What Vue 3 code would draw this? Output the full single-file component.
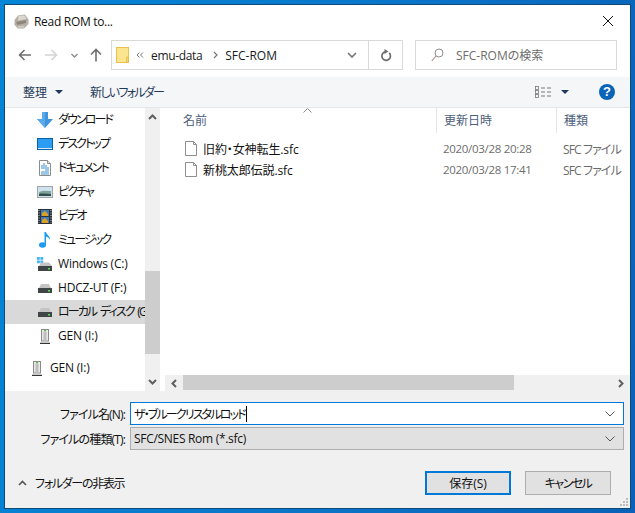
<script setup>
const navItems = [
  { label: 'ダウンロード', icon: 'download', kana: true },
  { label: 'デスクトップ', icon: 'desktop', kana: true },
  { label: 'ドキュメント', icon: 'doc', kana: true },
  { label: 'ピクチャ', icon: 'pic', kana: true },
  { label: 'ビデオ', icon: 'video', kana: true },
  { label: 'ミュージック', icon: 'music', kana: true },
  { label: 'Windows (C:)', icon: 'win' },
  { label: 'HDCZ-UT (F:)', icon: 'drive' },
  { label: 'ローカル ディスク (G:)', icon: 'drive', selected: true, kana: true },
  { label: 'GEN (I:)', icon: 'usb' },
  { label: 'GEN (I:)', icon: 'usb', root: true }
]
const files = [
  { name: '旧約・女神転生.sfc', date: '2020/03/28 20:28', type: 'SFC ファイル' },
  { name: '新桃太郎伝説.sfc', date: '2020/03/28 17:41', type: 'SFC ファイル' }
]
</script>

<template>
  <div class="desktop">
    <div class="window">
      <header class="title">
        <svg class="app" width="15" height="15" viewBox="0 0 15 15">
          <path d="M4 1.500 11 .5l3.500 5v4.500L10 14.500H4L.5 11V6z" fill="#b5afa6"/>
          <path d="M4.500 2 10.500 1.500 12.500 5 4 6.500z" fill="#dcd8d0"/>
          <path d="M2 8l10-2v3L3.500 11z" fill="#8c867c"/>
          <path d="M4 12h6v1.500H4z" fill="#d2cec6"/>
        </svg>
        <span class="title-text">Read ROM to...</span>
        <svg class="close" width="12" height="12" viewBox="0 0 12 12"><path d="M1 1l10 10M11 1 1 11" stroke="#111" stroke-width="1" fill="none"/></svg>
      </header>

      <div class="navbar">
        <div class="arrows">
          <svg width="14" height="12" viewBox="0 0 14 12"><path d="M13 6H2M6.500 1 1.500 6l5 5" stroke="#6f6f6f" stroke-width="1.600" fill="none"/></svg>
          <svg width="14" height="12" viewBox="0 0 14 12"><path d="M1 6h11M7.500 1l5 5-5 5" stroke="#d4d4d4" stroke-width="1.600" fill="none"/></svg>
          <svg width="7" height="5" viewBox="0 0 7 5"><path d="M.5 1l3 3 3-3" stroke="#8a8a8a" stroke-width="1.300" fill="none"/></svg>
          <svg width="12" height="14" viewBox="0 0 12 14"><path d="M6 13.500V2M1 6.500l5-5 5 5" stroke="#6f6f6f" stroke-width="1.600" fill="none"/></svg>
        </div>
        <div class="address">
          <svg class="folder" width="13" height="16" viewBox="0 0 13 16"><rect x=".5" y=".5" width="12" height="15" fill="#fbe68f" stroke="#e8c14f"/><rect x="10.500" y="10" width="2" height="5.500" fill="#f6d36b" stroke="#e0b43f" stroke-width=".6"/></svg>
          <svg class="crumb-first" width="8" height="6" viewBox="0 0 8 6"><path d="M3.500.5 1 3l2.500 2.500M7 .500 4.500 3 7 5.500" stroke="#777" fill="none"/></svg>
          <span class="crumb">emu-data</span>
          <svg class="sep" width="5" height="8" viewBox="0 0 5 8"><path d="M1 1l3 3-3 3" stroke="#777" stroke-width="1.200" fill="none"/></svg>
          <span>SFC-ROM</span>
          <svg class="addr-drop" width="10" height="6" viewBox="0 0 10 6"><path d="M1 1l4 4 4-4" stroke="#777" stroke-width="1.600" fill="none"/></svg>
          <div class="refresh">
            <svg width="12" height="13" viewBox="0 0 12 13"><path d="M4 3.200a4.300 4.300 0 1 0 4.300 0" stroke="#6f6f6f" stroke-width="1.700" fill="none" transform="rotate(15 6 7)"/><path d="M4.500 0v5l4-2.500z" fill="#6f6f6f"/></svg>
          </div>
        </div>
        <div class="search">
          <svg width="13" height="14" viewBox="0 0 13 14"><circle cx="8" cy="5" r="4" stroke="#8f8f8f" fill="none"/><path d="M5 8 .8 13" stroke="#b08a8a" stroke-width="1.100"/></svg>
          <span>SFC-ROMの検索</span>
        </div>
      </div>

      <div class="toolbar">
        <span class="tool organize">整理</span>
        <i class="caret"></i>
        <span class="tool newfolder">新しいフォルダー</span>
        <svg class="views" width="16" height="12" viewBox="0 0 16 12">
          <rect x=".5" y=".500" width="3" height="3" fill="none" stroke="#777" stroke-width=".8"/>
          <rect x=".5" y="4.500" width="3" height="3" fill="none" stroke="#777" stroke-width=".8"/>
          <rect x=".5" y="8.500" width="3" height="3" fill="none" stroke="#777" stroke-width=".8"/>
          <path d="M6 2h4M12 2h4M6 6h4M12 6h4M6 10h4M12 10h4" stroke="#777"/>
        </svg>
        <i class="caret viewcaret"></i>
        <span class="help">?</span>
      </div>

      <main class="main">
        <nav class="tree">
          <div v-for="(item, i) in navItems" :key="i" class="tree-row" :class="{ selected: item.selected, root: item.root }">
            <span class="ti">
              <svg v-if="item.icon === 'download'" width="16" height="16" viewBox="0 0 16 16"><path d="M5 0h6v7h5l-8 9-8-9h5z" fill="#3f94dc"/><path d="M5 0h3v16L0 7h5z" fill="#5aa9ea"/></svg>
              <svg v-else-if="item.icon === 'desktop'" width="16" height="12" viewBox="0 0 16 12"><rect width="16" height="12" fill="#0b62a8"/><rect x="1" y="1" width="14" height="9" fill="#2b9df2"/><path d="M1 10h14v1H1z" fill="#d5e9f8"/></svg>
              <svg v-else-if="item.icon === 'doc'" width="12" height="16" viewBox="0 0 12 16"><path d="M.500.500h8l3 3v12H.500z" fill="#fff" stroke="#8b8b8b"/><path d="M4 4h2M2 6h6M2 8h8M6 10h4M2 12h8M2 14h8" stroke="#3d8fcf"/><path d="M8.500.500v3h3" fill="#ddd" stroke="#8b8b8b"/></svg>
              <svg v-else-if="item.icon === 'pic'" width="16" height="12" viewBox="0 0 16 12"><rect x=".500" y=".500" width="15" height="11" fill="#cfe3ee" stroke="#a3a3a3"/><path d="M2 6c4-2 8-1 12-1v5H2z" fill="#7fa39a"/><path d="M2 8c4-1 8 0 12 0v2H2z" fill="#2f4f4a"/></svg>
              <svg v-else-if="item.icon === 'video'" width="14" height="15" viewBox="0 0 14 15"><rect width="14" height="15" fill="#2c3238"/><rect x="3" y="1" width="8" height="6" fill="#3f7bb5"/><rect x="3" y="8" width="8" height="6" fill="#3f7bb5"/><path d="M4 4l3-2 3 3v2H4zM4 11l3-2 3 3v2H4z" fill="#d9a12a"/><path d="M1 1v13M13 1v13" stroke="#cfd3d6" stroke-dasharray="1 1.500"/></svg>
              <svg v-else-if="item.icon === 'music'" width="12" height="16" viewBox="0 0 12 16"><ellipse cx="3.500" cy="13" rx="3.500" ry="2.800" fill="#1d9bf0"/><path d="M5.500 13V0h1.500c.5 3 4.500 4 4 8-.6-2-2.500-3-4-3.500V13z" fill="#1d9bf0"/></svg>
              <svg v-else-if="item.icon === 'win'" width="16" height="14" viewBox="0 0 16 14"><path d="M0 0h2.800v2.800H0zM3.400 0h2.800v2.800H3.400zM0 3.400h2.800v2.800H0zM3.400 3.400h2.800v2.800H3.400z" fill="#3ab4f2"/><path d="M2 9l2-3.500h8L15 9z" fill="#c4c4c4"/><rect x="1" y="9" width="14" height="5" fill="#3f4446"/><rect x="11" y="11" width="2" height="1.500" fill="#5fe04a"/></svg>
              <svg v-else-if="item.icon === 'drive'" width="14" height="9" viewBox="0 0 14 9"><path d="M1 4 3 0h8l2 4z" fill="#c4c4c4"/><rect y="4" width="14" height="5" fill="#3f4446"/><rect x="10" y="6" width="2" height="1.500" fill="#5fe04a"/></svg>
              <svg v-else width="10" height="15" viewBox="0 0 10 15"><rect x="1.500" y=".500" width="7" height="11.500" fill="#e9e9e9" stroke="#8a8a8a"/><rect x="3.500" y="3" width="3" height="9" fill="#bdbdbd"/><rect x="4" y="1" width="2" height="1.500" fill="#5fc04a"/><path d="M0 14.500h10" stroke="#333" stroke-width="1.500"/></svg>
            </span>
            <span class="tl" :class="{ kana: item.kana }">{{ item.label }}</span>
          </div>
        </nav>

        <div class="vscroll">
          <svg class="arrow" width="9" height="6" viewBox="0 0 9 6"><path d="M1 5l3.500-3.500L8 5" stroke="#606060" stroke-width="2" fill="none"/></svg>
          <div class="vtrack"><div class="vthumb"></div></div>
          <svg class="arrow" width="9" height="6" viewBox="0 0 9 6"><path d="M1 1l3.500 3.500L8 1" stroke="#606060" stroke-width="2" fill="none"/></svg>
        </div>

        <section class="files">
          <div class="head">
            <svg class="sort" width="9" height="5" viewBox="0 0 9 5"><path d="M.500 4.500l4-4 4 4" stroke="#8a8a8a" fill="none"/></svg>
            <span class="col col-name">名前</span>
            <span class="col col-date">更新日時</span>
            <span class="col col-type">種類</span>
          </div>
          <ul class="list">
            <li v-for="f in files" :key="f.name" class="file">
              <svg width="12" height="15" viewBox="0 0 12 15"><path d="M.500.500h8l3 3v11H.500z" fill="#fff" stroke="#8e8e8e"/><path d="M8.500.500v3h3" fill="none" stroke="#8e8e8e"/></svg>
              <span class="fname">{{ f.name }}</span>
              <span class="fdate">{{ f.date }}</span>
              <span class="ftype">{{ f.type }}</span>
            </li>
          </ul>
          <div class="hscroll">
            <svg class="harrow" width="6" height="9" viewBox="0 0 6 9"><path d="M5 1 1.500 4.500 5 8" stroke="#606060" stroke-width="2" fill="none"/></svg>
            <div class="hthumb"></div>
            <span class="hfill"></span>
            <svg class="harrow" width="6" height="9" viewBox="0 0 6 9"><path d="M1 1l3.500 3.500L1 8" stroke="#606060" stroke-width="2" fill="none"/></svg>
          </div>
        </section>
      </main>

      <footer class="footer">
        <div class="fields">
          <label>ファイル名(N):</label>
          <div class="input">
            <span class="value">ザ・ブルークリスタルロッド</span><i class="cursor"></i>
            <svg class="drop" width="10" height="6" viewBox="0 0 10 6"><path d="M.500.500 5 5 9.500.500" stroke="#555" fill="none"/></svg>
          </div>
          <label>ファイルの種類(T):</label>
          <div class="select">
            <span class="type-value">SFC/SNES Rom (*.sfc)</span>
            <svg class="drop" width="10" height="6" viewBox="0 0 10 6"><path d="M.500.500 5 5 9.500.500" stroke="#555" fill="none"/></svg>
          </div>
        </div>
        <div class="actions">
          <div class="hide">
            <svg width="9" height="6" viewBox="0 0 9 6"><path d="M1 5l3.500-3.500L8 5" stroke="#555" stroke-width="1.600" fill="none"/></svg>
            <span class="hide-text">フォルダーの非表示</span>
          </div>
          <button class="btn primary">保存(S)</button>
          <button class="btn cancel">キャンセル</button>
        </div>
        <svg class="grip" width="10" height="10" viewBox="0 0 10 10"><path d="M7 1h2v2H7zM4 4h2v2H4zM7 4h2v2H7zM1 7h2v2H1zM4 7h2v2H4zM7 7h2v2H7z" fill="#bdbdbd"/></svg>
      </footer>
    </div>
  </div>
</template>

<style>
html, body { margin: 0; height: 100%; overflow: hidden; }
</style>

<style scoped>
.desktop {
  width: 635px;
  height: 513px;
  box-sizing: border-box;
  padding: 4px;
  background: linear-gradient(100deg, #0585d6 0%, #0a77cb 50%, #0a62b8 100%);
  font: 12px "Open Sans", "Noto Sans CJK JP", sans-serif;
  font-feature-settings: "palt";
  color: #111;
}
.window {
  width: 627px;
  height: 505px;
  box-sizing: border-box;
  border: 1px solid #0d4a75;
  background: #fff;
  display: flex;
  flex-direction: column;
}
.title {
  height: 32px;
  flex: none;
  display: flex;
  align-items: center;
  padding: 0 16px 0 9px;
}
.title .app { margin-right: 5px; }
.title-text { letter-spacing: -0.3px; }
.title .close { margin-left: auto; }
.navbar {
  height: 40px;
  flex: none;
  display: flex;
  align-items: center;
  box-sizing: border-box;
  padding-bottom: 4px;
}
.arrows {
  width: 106px;
  flex: none;
  display: flex;
  align-items: center;
  box-sizing: border-box;
  padding-left: 13px;
}
.arrows svg:nth-child(2) { margin-left: 12px; }
.arrows svg:nth-child(3) { margin-left: 13px; }
.arrows svg:nth-child(4) { margin-left: 12px; }
.address {
  width: 292px;
  height: 30px;
  flex: none;
  box-sizing: border-box;
  border: 1px solid #d9d9d9;
  display: flex;
  align-items: center;
  padding-left: 4px;
  color: #1a1a1a;
}
.crumb-first { margin: 0 7px 0 7px; }
.crumb { letter-spacing: -0.35px; }
.sep { margin: 0 7px 0 11px; }
.addr-drop { margin-left: auto; margin-right: 11px; }
.refresh {
  width: 33px;
  height: 100%;
  flex: none;
  border-left: 1px solid #d9d9d9;
  display: flex;
  align-items: center;
  justify-content: center;
}
.search {
  width: 202px;
  height: 30px;
  margin-left: 12px;
  box-sizing: border-box;
  border: 1px solid #d9d9d9;
  display: flex;
  align-items: center;
  padding-left: 15px;
  gap: 12px;
  color: #6d6d6d;
}
.toolbar {
  height: 31px;
  flex: none;
  box-sizing: border-box;
  background: #f5f6f7;
  border-bottom: 1px solid #e6e6e6;
  display: flex;
  align-items: center;
  color: #1e395b;
}
.organize { margin-left: 18px; }
.caret {
  display: inline-block;
  border: 4px solid transparent;
  border-top: 4px solid #1e395b;
  border-bottom: 0;
  margin-left: 8px;
}
.newfolder { margin-left: 27px; letter-spacing: -1.7px; }
.views { margin-left: auto; }
.viewcaret { margin-left: 10px; }
.help {
  width: 16px;
  height: 16px;
  border-radius: 50%;
  background: #0a64b8;
  color: #fff;
  font: bold 13px/16px "Liberation Sans", sans-serif;
  text-align: center;
  margin: 0 15px 0 30px;
}
.main {
  flex: 1;
  min-height: 0;
  display: flex;
}
.tree {
  width: 140px;
  flex: none;
  overflow: hidden;
}
.tree-row {
  height: 24px;
  display: flex;
  align-items: center;
  white-space: nowrap;
  overflow: hidden;
}
.tree-row.selected { background: #d9d9d9; }
.tree-row.root { margin-top: 8px; }
.ti {
  width: 16px;
  margin-left: 32px;
  margin-right: 5px;
  flex: none;
  display: flex;
  justify-content: center;
}
.tree-row.root .ti { margin-left: 24px; }
.tl { position: relative; top: -1px; letter-spacing: -0.2px; }
.tl.kana { letter-spacing: -1.9px; word-spacing: 2.5px; }
.vscroll {
  width: 15px;
  flex: none;
  margin-right: 5px;
  background: #f0f0f0;
  display: flex;
  flex-direction: column;
  align-items: center;
}
.vscroll .arrow { flex: none; margin: 6px 0; }
.vtrack {
  flex: 1;
  width: 100%;
  padding-top: 145px;
  box-sizing: border-box;
}
.vthumb { height: 83px; background: #cdcdcd; }
.files {
  flex: 1;
  min-width: 0;
  display: flex;
  flex-direction: column;
  position: relative;
}
.head {
  height: 25px;
  flex: none;
  display: flex;
  color: #4c607a;
}
.sort { position: absolute; left: 138px; top: 0; }
.col {
  box-sizing: border-box;
  height: 100%;
  padding: 5px 0 0 7px;
  line-height: 15px;
}
.col-name { width: 271px; padding-left: 18px; }
.col-date { width: 120px; border-left: 1px solid #e5e5e5; }
.col-type { flex: 1; border-left: 1px solid #e5e5e5; }
.list {
  flex: 1;
  list-style: none;
  margin: 0;
  padding: 5px 0 0 20px;
  overflow: hidden;
}
.file {
  height: 21px;
  display: flex;
  align-items: center;
  white-space: nowrap;
}
.fname { margin-left: 6px; width: 240px; flex: none; letter-spacing: -0.1px; }
.fdate { width: 120px; flex: none; color: #6d6d6d; font-size: 11.5px; letter-spacing: -0.3px; }
.ftype { color: #6d6d6d; letter-spacing: -0.9px; }
.hscroll {
  height: 16px;
  flex: none;
  display: flex;
  align-items: center;
  background: #f0f0f0;
}
.harrow { flex: none; margin: 0 6px; }
.hthumb { width: 331px; height: 15px; margin-top: -1px; background: #cdcdcd; }
.hfill { flex: 1; }
.footer {
  height: 117px;
  flex: none;
  box-sizing: border-box;
  background: #f0f0f0;
  padding: 11px 6px 0 0;
  position: relative;
}
.fields {
  display: grid;
  grid-template-columns: 120px 1fr;
  column-gap: 5px;
  row-gap: 2px;
  align-items: center;
}
.fields label { text-align: right; white-space: nowrap; letter-spacing: -0.85px; }
.input, .select {
  height: 23px;
  box-sizing: border-box;
  display: flex;
  align-items: center;
  padding: 0 8px 0 3px;
}
.input { background: #fff; border: 1.5px solid #0078d7; }
.select { background: #e1e1e1; border: 1px solid #adadad; }
.value { letter-spacing: -1.85px; }
.type-value { letter-spacing: -0.3px; }
.drop { margin-left: auto; }
.cursor { width: 1px; height: 16px; background: #000; margin-left: 1px; }
.actions {
  display: flex;
  align-items: center;
  margin-top: 21px;
  padding-right: 13px;
}
.hide {
  display: flex;
  align-items: center;
  gap: 8px;
  margin-left: 13px;
  margin-right: auto;
}
.hide-text { letter-spacing: -1.3px; }
.btn {
  width: 86px;
  height: 24px;
  box-sizing: border-box;
  font: inherit;
  color: #111;
  background: #e1e1e1;
  border: 1px solid #adadad;
  padding: 0;
  margin-left: 14px;
}
.btn.primary { border: 2px solid #0078d7; }
.btn.cancel { letter-spacing: -1.5px; }
.grip { position: absolute; right: 1px; bottom: 1px; }
</style>
